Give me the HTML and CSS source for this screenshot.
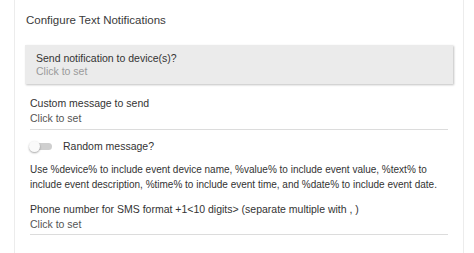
FILE: index.html
```html
<!DOCTYPE html>
<html>
<head>
<meta charset="utf-8">
<link rel="stylesheet" href="styles.css">
</head>
<body>
<div class="card">
  <div class="title">Configure Text Notifications</div>
  <div class="selector">
    <div class="label">Send notification to device(s)?</div>
    <div class="value muted">Click to set</div>
  </div>
  <div class="field">
    <div class="label">Custom message to send</div>
    <div class="value">Click to set</div>
  </div>
  <div class="toggle-row">
    <span class="toggle"><span class="knob"></span></span>
    <span class="label">Random message?</span>
  </div>
  <p class="desc">Use %device% to include event device name, %value% to include event value, %text% to include event description, %time% to include event time, and %date% to include event date.</p>
  <div class="field last">
    <div class="label">Phone number for SMS format +1&lt;10 digits&gt; (separate multiple with , )</div>
    <div class="value">Click to set</div>
  </div>
</div>
</body>
</html>
```
FILE: styles.css
```css
html, body {
  margin: 0;
  padding: 0;
  background: #ffffff;
}
body {
  font-family: "Liberation Sans", Arial, sans-serif;
  color: #333333;
  font-size: 10.5px;
}
.card {
  margin: 0 10px 0 14px;
  height: 253px;
  box-sizing: border-box;
  border-left: 1px solid #ececec;
  border-right: 1px solid #ececec;
  padding: 12px 10px 0 10px;
}
.title {
  font-size: 11.5px;
  line-height: 16px;
  padding-left: 1px;
  color: #3a3a3a;
}
.selector {
  margin-top: 17px;
  height: 39px;
  box-sizing: border-box;
  background: #ebebeb;
  box-shadow: 1px 1px 2px rgba(0,0,0,0.25);
  padding: 7px 11px 0 11px;
  line-height: 12.5px;
}
.muted {
  color: #9a9a9a;
}
.field {
  margin: 0 5px;
  border-bottom: 1px solid #dcdcdc;
  line-height: 15px;
  padding-bottom: 3px;
}
.selector + .field {
  margin-top: 12px;
}
.field .value {
  color: #555555;
}
.toggle-row {
  display: flex;
  align-items: center;
  margin: 9px 5px 0 4px;
  height: 14px;
}
.toggle {
  position: relative;
  width: 24px;
  height: 11px;
  display: inline-block;
}
.toggle::before {
  content: "";
  position: absolute;
  left: 4px;
  top: 2px;
  width: 19px;
  height: 7px;
  border-radius: 4px;
  background: #cfcfcf;
}
.knob {
  position: absolute;
  left: 0;
  top: 0;
  width: 11px;
  height: 11px;
  border-radius: 50%;
  background: #fafafa;
  box-shadow: 0 1px 2px rgba(0,0,0,0.35);
}
.toggle-row .label {
  margin-left: 10px;
}
.desc {
  margin: 10px 5px 0 5px;
  font-size: 10px;
  line-height: 14.5px;
}
.desc + .field {
  margin-top: 10px;
}
.field.last {
  padding-bottom: 2px;
}
```
